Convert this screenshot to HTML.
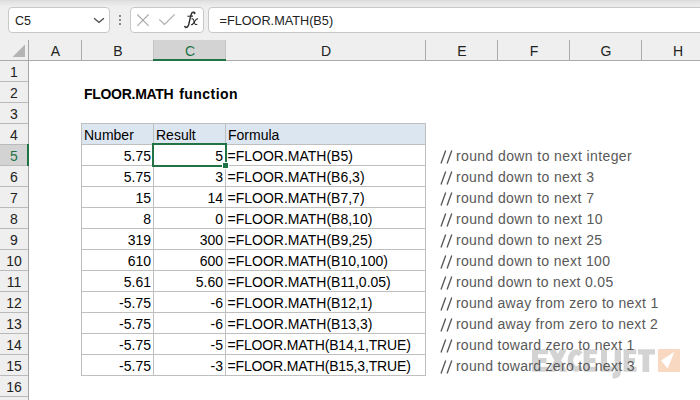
<!DOCTYPE html><html><head><meta charset="utf-8"><style>
*{margin:0;padding:0;box-sizing:border-box}
html,body{width:700px;height:400px;overflow:hidden;background:#fff;font-family:"Liberation Sans",sans-serif;color:#000}
.a{position:absolute}
.box{position:absolute;top:7px;height:26px;background:#fff;border:1px solid #c8c8c8;border-radius:4px}
.hdr{position:absolute;top:41px;height:20px;font-size:14px;line-height:21px;text-align:center;color:#222}
.vsep{position:absolute;top:40px;width:1px;height:20px;background:#a9a9a9}
.rh{position:absolute;left:0;width:28px;height:20px;font-size:14px;line-height:23px;text-align:center;color:#222}
.rl{position:absolute;left:0;width:28px;height:1px;background:#bababa}
.t{position:absolute;font-size:14px;line-height:20px;white-space:nowrap}
.cm{color:#595959}
.gl{position:absolute;background:#bfbfbf}
</style></head><body>
<div class="a" style="left:0;top:0;width:700px;height:61px;background:#efefef"></div>
<div class="a" style="left:0;top:0;width:700px;height:7px;background:linear-gradient(#d8d8d8 0px,#e2e2e2 1.5px,#efefef 7px)"></div>
<div class="box" style="left:8px;width:102px"></div>
<div class="t" style="left:15px;top:11px;font-size:12.5px;color:#222">C5</div>
<svg class="a" style="left:92px;top:15px" width="14" height="10" viewBox="0 0 14 10"><path d="M2.1 3.2 L7 7.5 L11.9 3.2" fill="none" stroke="#4a4a4a" stroke-width="1.3"/></svg>
<div class="a" style="left:119px;top:15px;width:2px;height:2px;background:#8a8a8a"></div>
<div class="a" style="left:119px;top:19px;width:2px;height:2px;background:#8a8a8a"></div>
<div class="a" style="left:119px;top:23px;width:2px;height:2px;background:#8a8a8a"></div>
<div class="box" style="left:130px;width:74px"></div>
<svg class="a" style="left:130px;top:7px" width="74" height="26" viewBox="0 0 74 26"><path d="M7.3 7.5 L18.6 18.8 M18.6 7.5 L7.3 18.8" stroke="#acacac" stroke-width="1.2" fill="none"/><path d="M29.3 12.3 L34.4 17.5 L44.7 7.4" stroke="#acacac" stroke-width="1.2" fill="none"/></svg>
<svg class="a" style="left:180px;top:8px" width="22" height="22" viewBox="0 0 22 22"><path d="M14.9 5.4 C14.6 4.2 13.3 3.7 12.2 4.6 C11.3 5.4 10.8 7.6 10.2 10.2 L8.7 16.6 C8.2 18.6 6.9 19.7 5.3 19.5" stroke="#2b2b2b" stroke-width="1.45" fill="none"/><circle cx="14.5" cy="5.3" r="0.9" fill="#2b2b2b"/><circle cx="5.0" cy="18.7" r="0.9" fill="#2b2b2b"/><path d="M7.4 8.3 L13.0 8.1" stroke="#2b2b2b" stroke-width="1.1" fill="none"/><path d="M11.5 11.0 C12.7 10.4 13.4 11.0 13.8 12.4 L14.7 15.4 C15.1 16.6 16.0 16.9 17.3 16.1" stroke="#2b2b2b" stroke-width="1.05" fill="none"/><path d="M18.0 11.0 C17.0 10.5 16.3 11.1 15.3 12.5 L13.1 15.7 C12.5 16.6 11.8 16.9 11.1 16.4" stroke="#2b2b2b" stroke-width="1.2" fill="none"/></svg>
<div class="box" style="left:208px;width:520px"></div>
<div class="t" style="left:219.5px;top:10.5px;font-size:12.7px;color:#222">=FLOOR.MATH(B5)</div>
<div class="a" style="left:0;top:60px;width:700px;height:1px;background:#ababab"></div>
<div class="a" style="left:153px;top:40px;width:73px;height:20px;background:#d3d3d3"></div>
<div class="vsep" style="left:153px;background:#c4c4c4"></div>
<div class="vsep" style="left:225px;background:#c4c4c4"></div>
<div class="a" style="left:153px;top:59px;width:73px;height:2px;background:#217346"></div>
<div class="vsep" style="left:81px"></div>
<div class="vsep" style="left:425px"></div>
<div class="vsep" style="left:497px"></div>
<div class="vsep" style="left:569px"></div>
<div class="vsep" style="left:641px"></div>
<div class="hdr" style="left:29.5px;width:52px">A</div>
<div class="hdr" style="left:82.5px;width:71px">B</div>
<div class="hdr" style="left:154.5px;width:71px;color:#217346">C</div>
<div class="hdr" style="left:226.5px;width:199px">D</div>
<div class="hdr" style="left:426.5px;width:71px">E</div>
<div class="hdr" style="left:498.5px;width:71px">F</div>
<div class="hdr" style="left:570.5px;width:71px">G</div>
<div class="hdr" style="left:642.5px;width:71px">H</div>
<svg class="a" style="left:12px;top:44px" width="14" height="14" viewBox="0 0 14 14"><path d="M13 0.5 L13 13 L0.5 13 Z" fill="#b4b4b4"/></svg>
<div class="a" style="left:0;top:61px;width:28px;height:339px;background:#efefef"></div>
<div class="rh" style="top:61px">1</div>
<div class="rl" style="top:81px"></div>
<div class="rh" style="top:82px">2</div>
<div class="rl" style="top:102px"></div>
<div class="rh" style="top:103px">3</div>
<div class="rl" style="top:123px"></div>
<div class="rh" style="top:124px">4</div>
<div class="rl" style="top:144px"></div>
<div class="a" style="left:0;top:145px;width:28px;height:20px;background:#d3d3d3"></div>
<div class="rh" style="top:145px;color:#217346">5</div>
<div class="rl" style="top:165px"></div>
<div class="rh" style="top:166px">6</div>
<div class="rl" style="top:186px"></div>
<div class="rh" style="top:187px">7</div>
<div class="rl" style="top:207px"></div>
<div class="rh" style="top:208px">8</div>
<div class="rl" style="top:228px"></div>
<div class="rh" style="top:229px">9</div>
<div class="rl" style="top:249px"></div>
<div class="rh" style="top:250px">10</div>
<div class="rl" style="top:270px"></div>
<div class="rh" style="top:271px">11</div>
<div class="rl" style="top:291px"></div>
<div class="rh" style="top:292px">12</div>
<div class="rl" style="top:312px"></div>
<div class="rh" style="top:313px">13</div>
<div class="rl" style="top:333px"></div>
<div class="rh" style="top:334px">14</div>
<div class="rl" style="top:354px"></div>
<div class="rh" style="top:355px">15</div>
<div class="rl" style="top:375px"></div>
<div class="rh" style="top:376px">16</div>
<div class="rl" style="top:396px"></div>
<div class="rh" style="top:397px">17</div>
<div class="rl" style="top:417px"></div>
<div class="a" style="left:28px;top:40px;width:1px;height:360px;background:#a6a6a6"></div>
<div class="a" style="left:27px;top:144px;width:2px;height:22px;background:#217346"></div>
<div class="t" style="left:84px;top:84px;font-weight:bold;letter-spacing:-0.29px">FLOOR.MATH</div>
<div class="t" style="left:179.2px;top:84px;font-weight:bold;letter-spacing:0.45px">function</div>
<div class="a" style="left:82px;top:124px;width:343px;height:20px;background:#dce6f1"></div>
<div class="gl" style="left:81px;top:123px;width:345px;height:1px"></div>
<div class="gl" style="left:81px;top:144px;width:345px;height:1px"></div>
<div class="gl" style="left:81px;top:165px;width:345px;height:1px"></div>
<div class="gl" style="left:81px;top:186px;width:345px;height:1px"></div>
<div class="gl" style="left:81px;top:207px;width:345px;height:1px"></div>
<div class="gl" style="left:81px;top:228px;width:345px;height:1px"></div>
<div class="gl" style="left:81px;top:249px;width:345px;height:1px"></div>
<div class="gl" style="left:81px;top:270px;width:345px;height:1px"></div>
<div class="gl" style="left:81px;top:291px;width:345px;height:1px"></div>
<div class="gl" style="left:81px;top:312px;width:345px;height:1px"></div>
<div class="gl" style="left:81px;top:333px;width:345px;height:1px"></div>
<div class="gl" style="left:81px;top:354px;width:345px;height:1px"></div>
<div class="gl" style="left:81px;top:375px;width:345px;height:1px"></div>
<div class="gl" style="left:81px;top:123px;width:1px;height:253px"></div>
<div class="gl" style="left:153px;top:123px;width:1px;height:253px"></div>
<div class="gl" style="left:225px;top:123px;width:1px;height:253px"></div>
<div class="gl" style="left:425px;top:123px;width:1px;height:253px"></div>
<svg class="a" style="left:528px;top:345px" width="130" height="40" viewBox="0 0 130 40"><g fill="#d3d3d3"><path d="M4 4.3H20V9.3H10V13H18.5V18H10V21.7H20V26.7H4Z"/><path d="M20.5 4.3H27.3L39 26.7H32.2Z"/><path d="M32.2 4.3H39L27.3 26.7H20.5Z"/><path d="M54.6 7.6A8.8 11.2 0 1 0 54.6 23.4L50.6 19.7A3.2 5.4 0 1 1 50.6 11.3Z"/><path d="M55.6 4.3H69V9.3H61.6V13H67.5V18H61.6V21.7H69V26.7H55.6Z"/><path d="M73 4.3H79V21.7H85V26.7H73Z"/><path d="M86.7 4.3H93V26.5Q93 33.6 84.5 33.6V28.3Q86.7 28.3 86.7 26Z"/><path d="M95.6 4.3H108.2V9.3H101V13H107V18H101V21.7H108.6V26.7H95.6Z"/><path d="M110 4.3H127V9.6H121.2V27H114.5V9.6H110Z"/></g></svg>
<div class="a" style="left:657.5px;top:348.8px;width:22.5px;height:22.8px;background:#f8d8c0;border-radius:1px"></div>
<svg class="a" style="left:657px;top:349px" width="23" height="23" viewBox="0 0 23 23"><path d="M17.5 2.8 L4 11.6 L10.5 19.5 Z" fill="#fff"/></svg>
<div class="t" style="left:84px;top:125px">Number</div>
<div class="t" style="left:156px;top:125px">Result</div>
<div class="t" style="left:228px;top:125px">Formula</div>
<div class="t" style="right:549px;top:146px">5.75</div>
<div class="t" style="right:477px;top:146px">5</div>
<div class="t" style="left:227.5px;top:146px;letter-spacing:0px">=FLOOR.MATH(B5)</div>
<svg class="a" style="left:438px;top:148px" width="16" height="16" viewBox="0 0 16 16"><path d="M3.0 15.6 L7.7 2.4 M9.1 15.6 L13.8 2.4" stroke="#595959" stroke-width="1.35" fill="none"/></svg>
<div class="t cm" style="left:455.9px;top:146px;letter-spacing:0.400px">round down to next integer</div>
<div class="t" style="right:549px;top:167px">5.75</div>
<div class="t" style="right:477px;top:167px">3</div>
<div class="t" style="left:227.5px;top:167px;letter-spacing:0px">=FLOOR.MATH(B6,3)</div>
<svg class="a" style="left:438px;top:169px" width="16" height="16" viewBox="0 0 16 16"><path d="M3.0 15.6 L7.7 2.4 M9.1 15.6 L13.8 2.4" stroke="#595959" stroke-width="1.35" fill="none"/></svg>
<div class="t cm" style="left:455.9px;top:167px;letter-spacing:0.384px">round down to next 3</div>
<div class="t" style="right:549px;top:188px">15</div>
<div class="t" style="right:477px;top:188px">14</div>
<div class="t" style="left:227.5px;top:188px;letter-spacing:0px">=FLOOR.MATH(B7,7)</div>
<svg class="a" style="left:438px;top:190px" width="16" height="16" viewBox="0 0 16 16"><path d="M3.0 15.6 L7.7 2.4 M9.1 15.6 L13.8 2.4" stroke="#595959" stroke-width="1.35" fill="none"/></svg>
<div class="t cm" style="left:455.9px;top:188px;letter-spacing:0.384px">round down to next 7</div>
<div class="t" style="right:549px;top:209px">8</div>
<div class="t" style="right:477px;top:209px">0</div>
<div class="t" style="left:227.5px;top:209px;letter-spacing:0px">=FLOOR.MATH(B8,10)</div>
<svg class="a" style="left:438px;top:211px" width="16" height="16" viewBox="0 0 16 16"><path d="M3.0 15.6 L7.7 2.4 M9.1 15.6 L13.8 2.4" stroke="#595959" stroke-width="1.35" fill="none"/></svg>
<div class="t cm" style="left:455.9px;top:209px;letter-spacing:0.400px">round down to next 10</div>
<div class="t" style="right:549px;top:230px">319</div>
<div class="t" style="right:477px;top:230px">300</div>
<div class="t" style="left:227.5px;top:230px;letter-spacing:0px">=FLOOR.MATH(B9,25)</div>
<svg class="a" style="left:438px;top:232px" width="16" height="16" viewBox="0 0 16 16"><path d="M3.0 15.6 L7.7 2.4 M9.1 15.6 L13.8 2.4" stroke="#595959" stroke-width="1.35" fill="none"/></svg>
<div class="t cm" style="left:455.9px;top:230px;letter-spacing:0.385px">round down to next 25</div>
<div class="t" style="right:549px;top:251px">610</div>
<div class="t" style="right:477px;top:251px">600</div>
<div class="t" style="left:227.5px;top:251px;letter-spacing:0px">=FLOOR.MATH(B10,100)</div>
<svg class="a" style="left:438px;top:253px" width="16" height="16" viewBox="0 0 16 16"><path d="M3.0 15.6 L7.7 2.4 M9.1 15.6 L13.8 2.4" stroke="#595959" stroke-width="1.35" fill="none"/></svg>
<div class="t cm" style="left:455.9px;top:251px;letter-spacing:0.371px">round down to next 100</div>
<div class="t" style="right:549px;top:272px">5.61</div>
<div class="t" style="right:477px;top:272px">5.60</div>
<div class="t" style="left:227.5px;top:272px;letter-spacing:0px">=FLOOR.MATH(B11,0.05)</div>
<svg class="a" style="left:438px;top:274px" width="16" height="16" viewBox="0 0 16 16"><path d="M3.0 15.6 L7.7 2.4 M9.1 15.6 L13.8 2.4" stroke="#595959" stroke-width="1.35" fill="none"/></svg>
<div class="t cm" style="left:455.9px;top:272px;letter-spacing:0.323px">round down to next 0.05</div>
<div class="t" style="right:549px;top:293px">-5.75</div>
<div class="t" style="right:477px;top:293px">-6</div>
<div class="t" style="left:227.5px;top:293px;letter-spacing:0px">=FLOOR.MATH(B12,1)</div>
<svg class="a" style="left:438px;top:295px" width="16" height="16" viewBox="0 0 16 16"><path d="M3.0 15.6 L7.7 2.4 M9.1 15.6 L13.8 2.4" stroke="#595959" stroke-width="1.35" fill="none"/></svg>
<div class="t cm" style="left:455.9px;top:293px;letter-spacing:0.321px">round away from zero to next 1</div>
<div class="t" style="right:549px;top:314px">-5.75</div>
<div class="t" style="right:477px;top:314px">-6</div>
<div class="t" style="left:227.5px;top:314px;letter-spacing:0px">=FLOOR.MATH(B13,3)</div>
<svg class="a" style="left:438px;top:316px" width="16" height="16" viewBox="0 0 16 16"><path d="M3.0 15.6 L7.7 2.4 M9.1 15.6 L13.8 2.4" stroke="#595959" stroke-width="1.35" fill="none"/></svg>
<div class="t cm" style="left:455.9px;top:314px;letter-spacing:0.310px">round away from zero to next 2</div>
<div class="t" style="right:549px;top:335px">-5.75</div>
<div class="t" style="right:477px;top:335px">-5</div>
<div class="t" style="left:227.5px;top:335px;letter-spacing:-0.16px">=FLOOR.MATH(B14,1,TRUE)</div>
<svg class="a" style="left:438px;top:337px" width="16" height="16" viewBox="0 0 16 16"><path d="M3.0 15.6 L7.7 2.4 M9.1 15.6 L13.8 2.4" stroke="#595959" stroke-width="1.35" fill="none"/></svg>
<div class="t cm" style="left:455.9px;top:335px;letter-spacing:0.308px">round toward zero to next 1</div>
<div class="t" style="right:549px;top:356px">-5.75</div>
<div class="t" style="right:477px;top:356px">-3</div>
<div class="t" style="left:227.5px;top:356px;letter-spacing:-0.16px">=FLOOR.MATH(B15,3,TRUE)</div>
<svg class="a" style="left:438px;top:358px" width="16" height="16" viewBox="0 0 16 16"><path d="M3.0 15.6 L7.7 2.4 M9.1 15.6 L13.8 2.4" stroke="#595959" stroke-width="1.35" fill="none"/></svg>
<div class="t cm" style="left:455.9px;top:356px;letter-spacing:0.312px">round toward zero to next 3</div>
<div class="a" style="left:152px;top:143px;width:75px;height:24px;border:2px solid #217346"></div>
<div class="a" style="left:222px;top:162px;width:7px;height:7px;background:#fff"></div>
<div class="a" style="left:223px;top:163px;width:5px;height:5px;background:#217346"></div>
</body></html>
